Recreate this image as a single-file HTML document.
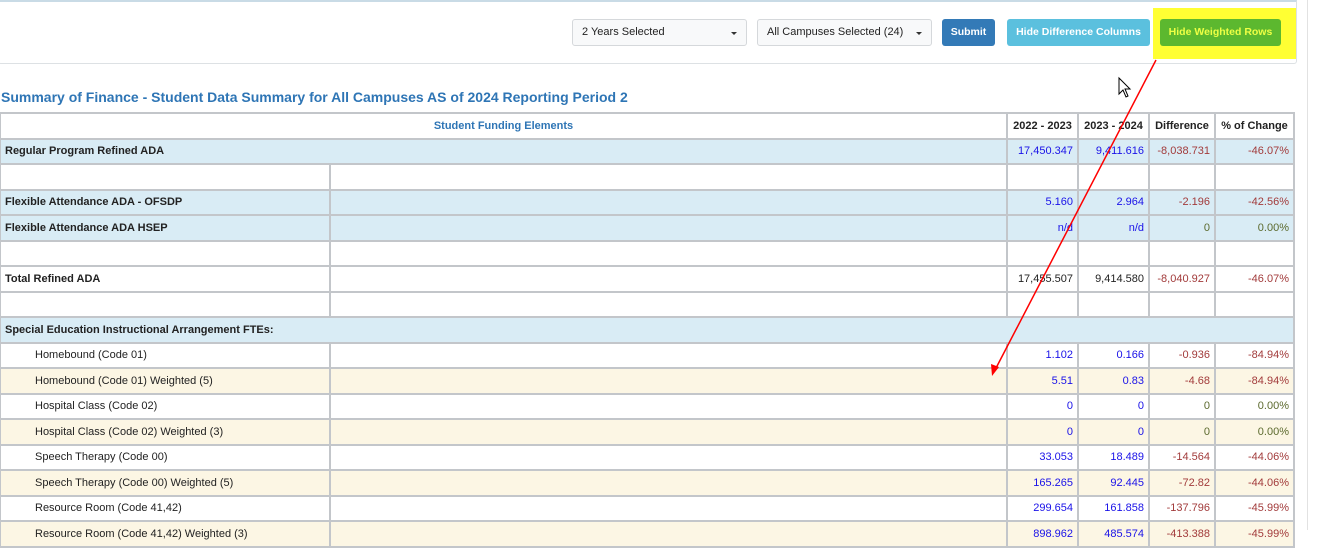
<!DOCTYPE html>
<html><head><meta charset="utf-8"><style>
*{box-sizing:border-box;margin:0;padding:0}
body{width:1318px;height:530px;overflow:hidden;background:#fff;font-family:"Liberation Sans",Arial,sans-serif;font-size:11px;color:#222;position:relative}
.panel{position:absolute;left:-2px;top:0;width:1299px;height:64px;border:1px solid #dde1e4;border-top:2px solid #c9dbe6;border-radius:0 0 3px 3px}
.sel{position:absolute;top:19px;height:27px;border:1px solid #d5d8db;border-radius:3px;background:#f8f9fa;font-size:11px;line-height:25px;padding-left:9px;color:#222}
.sel:after{content:"";position:absolute;right:9px;top:12px;border-left:3px solid transparent;border-right:3px solid transparent;border-top:3px solid #333}
.btn{position:absolute;top:19px;height:27px;border-radius:3px;color:#fff;font-weight:bold;font-size:10.5px;line-height:27px;text-align:center}
.title{position:absolute;left:1px;top:89px;font-size:14px;font-weight:bold;color:#2e75b5}
table{position:absolute;left:-1px;top:112px;border-collapse:collapse;table-layout:fixed;width:1294px}
td{border:2px solid #c3c6ca;height:25.5px;padding:0 4px;white-space:nowrap;overflow:hidden}
tr.b td{background:#d9ecf5}
tr.c td{background:#fcf6e4}
.l{font-weight:bold;color:#222}
.i{padding-left:34px}
.n{text-align:right;color:#1a12e8}
.d{text-align:right;color:#a23b3b}
.g{color:#5c6a2e}
.k{text-align:right;color:#222}
</style></head><body>
<div class="panel"></div>
<div class="sel" style="left:572px;width:175px">2 Years Selected</div>
<div class="sel" style="left:757px;width:175px">All Campuses Selected (24)</div>
<div class="btn" style="left:942px;width:53px;background:#337ab7">Submit</div>
<div class="btn" style="left:1007px;width:143px;background:#5bc0de">Hide Difference Columns</div>
<div style="position:absolute;left:1153px;top:8px;width:143px;height:51px;background:#ffff33"></div>
<div class="btn" style="left:1160px;width:121px;background:#5cb82f;color:#eeff44">Hide Weighted Rows</div>
<div class="title">Summary of Finance - Student Data Summary for All Campuses AS of 2024 Reporting Period 2</div>
<div style="position:absolute;left:1307px;top:0;width:1px;height:530px;background:#e2e2e2"></div>
<table>
<colgroup><col style="width:330px"><col style="width:677px"><col style="width:71px"><col style="width:71px"><col style="width:66px"><col style="width:79px"></colgroup>
<tr><td colspan="2" style="text-align:center;font-weight:bold;color:#2e75b5">Student Funding Elements</td><td class="k l" style="text-align:center">2022 - 2023</td><td class="l" style="text-align:center">2023 - 2024</td><td class="l" style="text-align:center">Difference</td><td class="l" style="text-align:center">% of Change</td></tr>
<tr class="b"><td colspan="2" class="l">Regular Program Refined ADA</td><td class="n">17,450.347</td><td class="n">9,411.616</td><td class="d">-8,038.731</td><td class="d">-46.07%</td></tr>
<tr><td></td><td></td><td></td><td></td><td></td><td></td></tr>
<tr class="b"><td class="l">Flexible Attendance ADA - OFSDP</td><td></td><td class="n">5.160</td><td class="n">2.964</td><td class="d">-2.196</td><td class="d">-42.56%</td></tr>
<tr class="b"><td class="l">Flexible Attendance ADA HSEP</td><td></td><td class="n">n/d</td><td class="n">n/d</td><td class="d g">0</td><td class="d g">0.00%</td></tr>
<tr><td></td><td></td><td></td><td></td><td></td><td></td></tr>
<tr><td class="l">Total Refined ADA</td><td></td><td class="k">17,455.507</td><td class="k">9,414.580</td><td class="d">-8,040.927</td><td class="d">-46.07%</td></tr>
<tr><td></td><td></td><td></td><td></td><td></td><td></td></tr>
<tr class="b"><td colspan="6" class="l">Special Education Instructional Arrangement FTEs:</td></tr>
<tr><td class="i">Homebound (Code 01)</td><td></td><td class="n">1.102</td><td class="n">0.166</td><td class="d">-0.936</td><td class="d">-84.94%</td></tr>
<tr class="c"><td class="i">Homebound (Code 01) Weighted (5)</td><td></td><td class="n">5.51</td><td class="n">0.83</td><td class="d">-4.68</td><td class="d">-84.94%</td></tr>
<tr><td class="i">Hospital Class (Code 02)</td><td></td><td class="n">0</td><td class="n">0</td><td class="d g">0</td><td class="d g">0.00%</td></tr>
<tr class="c"><td class="i">Hospital Class (Code 02) Weighted (3)</td><td></td><td class="n">0</td><td class="n">0</td><td class="d g">0</td><td class="d g">0.00%</td></tr>
<tr><td class="i">Speech Therapy (Code 00)</td><td></td><td class="n">33.053</td><td class="n">18.489</td><td class="d">-14.564</td><td class="d">-44.06%</td></tr>
<tr class="c"><td class="i">Speech Therapy (Code 00) Weighted (5)</td><td></td><td class="n">165.265</td><td class="n">92.445</td><td class="d">-72.82</td><td class="d">-44.06%</td></tr>
<tr><td class="i">Resource Room (Code 41,42)</td><td></td><td class="n">299.654</td><td class="n">161.858</td><td class="d">-137.796</td><td class="d">-45.99%</td></tr>
<tr class="c"><td class="i">Resource Room (Code 41,42) Weighted (3)</td><td></td><td class="n">898.962</td><td class="n">485.574</td><td class="d">-413.388</td><td class="d">-45.99%</td></tr>
</table>
<svg style="position:absolute;left:0;top:0" width="1318" height="530">
<line x1="1156" y1="60" x2="995" y2="370" stroke="#f00" stroke-width="1.5"/>
<polygon points="992,376 991,364 999,367" fill="#f00"/>
<path d="M1119,78 L1119,94 L1123,90 L1126,97 L1128,96 L1125,89 L1130,89 Z" fill="#fff" stroke="#000" stroke-width="1"/>
</svg>
</body></html>
